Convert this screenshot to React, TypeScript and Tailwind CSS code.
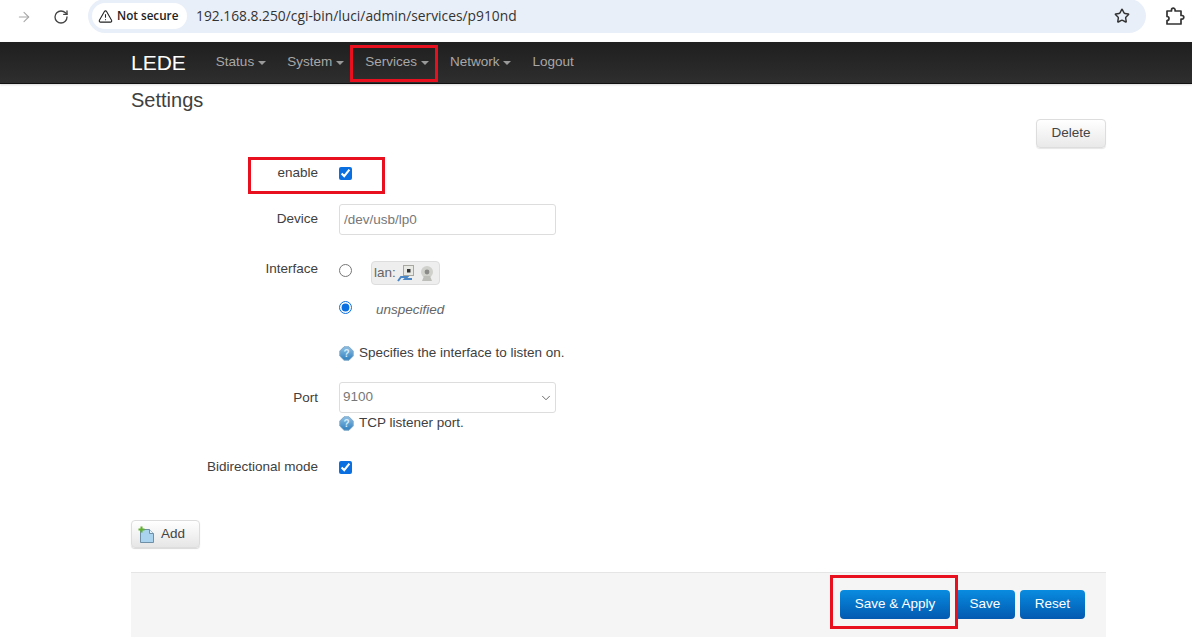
import React from 'react';
import { ArrowRight, RotateCw, TriangleAlert, Star, ChevronDown } from 'lucide-react';

const HelpIcon = () => (
  <svg width="15" height="15" viewBox="0 0 15 15" className="shrink-0">
    <defs>
      <linearGradient id="helpFill" x1="0" y1="0" x2="0" y2="1">
        <stop offset="0" stopColor="#8fc0e4" />
        <stop offset="1" stopColor="#2f7fc0" />
      </linearGradient>
    </defs>
    <path d="M5 .8h5L14.200 5v5L10 14.200H5L.8 10V5z" fill="url(#helpFill)" stroke="#7fa8c8" />
    <text x="7.500" y="11" textAnchor="middle" fontSize="10" fontWeight="700" fill="#d8ecf8" fontFamily="Liberation Sans, sans-serif">?</text>
  </svg>
);

const AddIcon = () => (
  <svg width="17" height="17" viewBox="0 0 17 17" className="shrink-0">
    <path d="M2.500 3.500h9l4 4v9h-13z" fill="#a9d3ee" stroke="#6f8fa6" />
    <path d="M11.500 3.500v4h4" fill="#e4f2fb" stroke="#6f8fa6" />
    <path d="M3.500 0.500v6M0.500 3.500h6" stroke="#62b02f" strokeWidth="2" />
  </svg>
);

const ExtensionIcon = () => (
  <svg width="20" height="20" viewBox="0 0 20 20" className="shrink-0">
    <path
      d="M2 5h4.500V4a1.800 1.800 0 0 1 3.600 0v1H16v4.500h1a1.800 1.800 0 0 1 0 3.600h-1V18H2v-3.500a2 2 0 0 0 0-4z"
      fill="none"
      stroke="#333"
      strokeWidth="1.700"
      strokeLinejoin="round"
    />
  </svg>
);

const LanIcons = () => (
  <span className="flex items-center gap-[3px]">
    <svg width="18" height="18" viewBox="0 0 18 18">
      <rect x="6.500" y="1.500" width="10" height="10" fill="#e8e8e4" stroke="#a8a8a0" />
      <rect x="10" y="5" width="3.500" height="3.500" fill="#333" />
      <path d="M1 17l3-4h6l-2 2h7" fill="none" stroke="#4a86c5" strokeWidth="2" />
    </svg>
    <svg width="18" height="18" viewBox="0 0 18 18">
      <circle cx="9" cy="8" r="6" fill="#cfcfcb" />
      <circle cx="9" cy="8" r="2.400" fill="#8a8a88" />
      <path d="M4 17l2-5h6l2 5z" fill="#bdbdb9" />
    </svg>
  </span>
);

const Caret = () => <span className="w-0 h-0 border-x-[4px] border-x-transparent border-t-[4px] border-t-[#999] ml-[4px] mt-[1px]" />;

const NavItem = ({ label, caret = true }: { label: string; caret?: boolean }) => (
  <a className="flex items-center text-[#a8a8a8] text-[13.500px]">
    {label}
    {caret && <Caret />}
  </a>
);

const Row = ({ label, className, labelClassName, children }: { label: string; className?: string; labelClassName?: string; children: React.ReactNode }) => (
  <div className={`flex ${className ?? ''}`}>
    <label className={`w-[187px] shrink-0 text-right text-[13.500px] text-[#404040] ${labelClassName ?? ''}`}>{label}</label>
    <div className="ml-[21px] flex-1 text-[13.500px] text-[#404040]">{children}</div>
  </div>
);

const BlueButton = ({ children, className }: { children: React.ReactNode; className?: string }) => (
  <button className={`h-[29px] rounded-[4px] bg-gradient-to-b from-[#0a8ce0] to-[#0459b0] text-white text-[13.500px] ${className ?? ''}`}>
    {children}
  </button>
);

export default function App() {
  return (
    <div className="w-[1192px] h-[639px] overflow-hidden bg-white font-['Liberation_Sans',sans-serif] text-[#404040]">
      {/* browser chrome */}
      <div className="h-[42px] flex items-start pl-[16px]">
        <ArrowRight size={16} strokeWidth={1.600} className="mt-[9px] shrink-0 text-[#a8a8a8]" />
        <RotateCw size={16} strokeWidth={2} className="mt-[9px] ml-[21px] shrink-0 text-[#444]" />
        <div className="ml-[19px] w-[1058px] shrink-0 h-[34px] rounded-[17px] bg-[#e9eff8] flex items-center pl-[4px] pr-[16px] -mt-[1px]">
          <div className="h-[26px] w-[95px] rounded-full bg-white flex items-center pl-[6px] gap-[4px]">
            <TriangleAlert size={15} strokeWidth={1.700} className="text-[#222]" />
            <span className="font-['Open_Sans',sans-serif] text-[11.700px] font-semibold text-[#222]">Not secure</span>
          </div>
          <span className="ml-[9px] font-['Open_Sans',sans-serif] text-[13.800px] text-[#333]">192.168.8.250/cgi-bin/luci/admin/services/p910nd</span>
          <Star size={16} strokeWidth={2.200} className="ml-auto text-[#333]" />
        </div>
        <span className="ml-[19px] mt-[6px]">
          <ExtensionIcon />
        </span>
      </div>

      {/* navbar */}
      <div className="h-[42px] bg-gradient-to-b from-[#1f1f1f] to-[#2e2e2e] border-b border-[#111] shadow-[0_1px_2px_rgba(0,0,0,0.15)] flex items-center pl-[131px]">
        <span className="text-[21px] text-white leading-none">LEDE</span>
        <div className="ml-[30px] flex items-center gap-[21px]">
          <NavItem label="Status" />
          <NavItem label="System" />
          <div className="relative">
            <NavItem label="Services" />
            <div className="absolute -left-[15px] -right-[9px] -top-[7px] -bottom-[9px] border-[3px] border-[#e8101f]" />
          </div>
          <NavItem label="Network" />
          <NavItem label="Logout" caret={false} />
        </div>
      </div>

      {/* content */}
      <div className="mx-[131px] w-[975px]">
        <h2 className="mt-[4px] h-[24px] text-[20px] leading-[24px] text-[#404040]">Settings</h2>

        <div className="flex justify-end mt-[7px]">
          <button className="w-[70px] h-[29px] rounded-[4px] border border-[#ddd] bg-gradient-to-b from-white to-[#e9e9e9] text-[13.500px] text-[#444] shadow-[0_1px_1px_rgba(0,0,0,0.1)]">
            Delete
          </button>
        </div>

        <Row label="enable" className="mt-[9px] h-[32px] items-center -mb-[1px]">
          <div className="relative w-fit flex items-center">
            <input type="checkbox" defaultChecked className="w-[13px] h-[13px] accent-[#0a6fe0]" />
            <div className="absolute -left-[91px] -right-[33px] -top-[10px] -bottom-[14px] border-[3px] border-[#e8101f] pointer-events-none" />
          </div>
        </Row>

        <Row label="Device" className="mt-[16px] items-center">
          <input
            placeholder="/dev/usb/lp0"
            className="w-[217px] h-[31px] rounded-[3px] border border-[#ddd] px-[4px] text-[13.500px] placeholder:text-[#777] outline-none"
          />
        </Row>

        <Row label="Interface" className="mt-[24px]">
          <div className="flex items-start gap-[19px] h-[22px] mt-[1px]">
            <input type="radio" name="iface" className="w-[13px] h-[13px] mt-[4px]" />
            <span className="h-[24px] w-[69px] mt-[1px] rounded-[4px] border border-[#ddd] bg-[#eeeeee] flex items-center pl-[2px] gap-[1px] text-[#666]">
              lan: <LanIcons />
            </span>
          </div>
          <div className="flex items-start gap-[24px] h-[22px] mt-[15px]">
            <input type="radio" name="iface" defaultChecked className="w-[13px] h-[13px] mt-[4px] accent-[#0a6fe0]" />
            <span className="italic text-[#666] mt-[3px]">unspecified</span>
          </div>
          <div className="flex items-center gap-[5px] h-[20px] mt-[24px]">
            <HelpIcon />
            <span>Specifies the interface to listen on.</span>
          </div>
        </Row>

        <Row label="Port" className="mt-[19px]" labelClassName="mt-[6px]">
          <div className="relative w-[217px]">
            <select defaultValue="9100" className="block w-full h-[31px] appearance-none rounded-[3px] border border-[#ddd] pl-[3px] text-[13.500px] text-[#777] bg-white outline-none">
              <option>9100</option>
              <option>9101</option>
              <option>9102</option>
            </select>
            <ChevronDown size={14} strokeWidth={1.500} className="absolute right-[3px] top-[9px] text-[#555] pointer-events-none" />
          </div>
          <div className="flex items-center gap-[5px] h-[20px]">
            <HelpIcon />
            <span>TCP listener port.</span>
          </div>
        </Row>

        <Row label="Bidirectional mode" className="mt-[24px] h-[20px] items-center">
          <input type="checkbox" defaultChecked className="block w-[13px] h-[13px] accent-[#0a6fe0]" />
        </Row>

        <button className="mt-[43px] flex items-center gap-[6px] w-[69px] h-[28px] pl-[6px] rounded-[4px] border border-[#ddd] bg-gradient-to-b from-white to-[#e6e6e6] text-[13.500px] text-[#444] shadow-[0_1px_1px_rgba(0,0,0,0.15)]">
          <AddIcon /> Add
        </button>

        <div className="mt-[24px] h-[65px] bg-[#f5f5f5] border-t border-[#e5e5e5] flex items-center justify-end gap-[5px] pr-[21px] pb-[1px]">
          <div className="relative flex">
            <BlueButton className="w-[110px]">Save &amp; Apply</BlueButton>
            <div className="absolute -left-[10px] -right-[8px] -top-[15px] -bottom-[10px] border-[3px] border-[#e8101f] pointer-events-none" />
          </div>
          <BlueButton className="w-[60px]">Save</BlueButton>
          <BlueButton className="w-[65px]">Reset</BlueButton>
        </div>
      </div>
    </div>
  );
}
